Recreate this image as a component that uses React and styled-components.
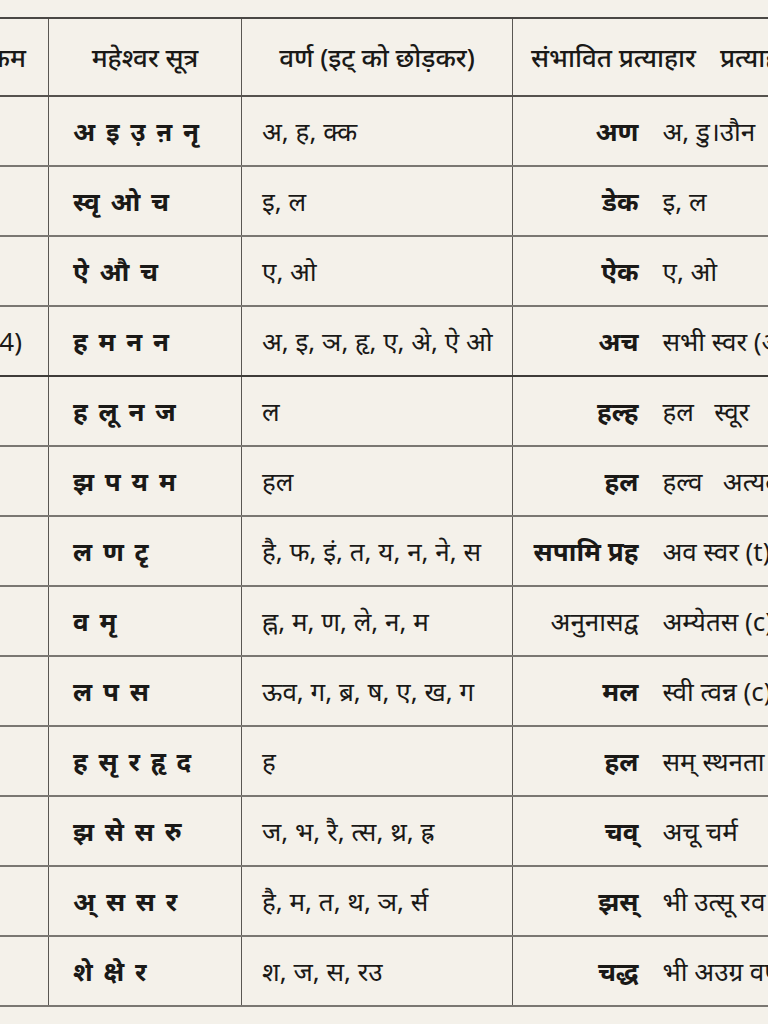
import React from 'react';
import styled, { createGlobalStyle } from 'styled-components';

const rows = [
  { no: '', sutra: 'अ इ उ़ ऩ नृ', varna: 'अ, ह, क्क', pra: 'अण', detail: 'अ, डु।उौन' },
  { no: '', sutra: 'स्वृ ओ च', varna: 'इ, ल', pra: 'डेक', detail: 'इ, ल' },
  { no: '', sutra: 'ऐ औ च', varna: 'ए, ओ', pra: 'ऐक', detail: 'ए, ओ' },
  { no: '4)', sutra: 'ह म न न', varna: 'अ, इ, ञ, हृ, ए, अे, ऐ ओ', pra: 'अच', detail: 'सभी स्वर (अच्)', thick: true },
  { no: '', sutra: 'ह लू न ज', varna: 'ल', pra: 'हल्ह', detail: 'हल\u00a0\u00a0\u00a0स्वूर' },
  { no: '', sutra: 'झ प य म', varna: 'हल', pra: 'हल', detail: 'हल्व\u00a0\u00a0\u00a0अत्यल्प' },
  { no: '', sutra: 'ल ण टृ', varna: 'है, फ, इं, त, य, न, ने, स', pra: 'सपामि प्रह', detail: 'अव स्वर (t)' },
  { no: '', sutra: 'व मृ', varna: 'ह्न, म, ण, ले, न, म', pra: 'अनुनासद्व', light: true, detail: 'अम्येतस (c)' },
  { no: '', sutra: 'ल प स', varna: 'ऊव, ग, ब्र, ष, ए, ख, ग', pra: 'मल', detail: 'स्वी त्वन्न (c)' },
  { no: '', sutra: 'ह सृ र हृ द', varna: 'ह', pra: 'हल', detail: 'सम् स्थनता' },
  { no: '', sutra: 'झ से स रु', varna: 'ज, भ, रै, त्स, थ्र, ह्र', pra: 'चव्', detail: 'अचू चर्म' },
  { no: '', sutra: 'अ् स स र', varna: 'है, म, त, थ, ञ, र्स', pra: 'झस्', detail: 'भी उत्सू रव' },
  { no: '', sutra: 'शे क्षे र', varna: 'श, ज, स, रउ', pra: 'चद्ध', detail: 'भी अउग्र वर्ण' },
];

function App() {
  return (
    <>
      <GlobalStyle />
      <Page>
        <Table>
          <colgroup>
            <col style={{ width: 110 }} />
            <col style={{ width: 193 }} />
            <col style={{ width: 271 }} />
            <col style={{ width: 136 }} />
            <col style={{ width: 220 }} />
          </colgroup>
          <thead>
            <HeadRow>
              <HeadCell $align="right">क्रम</HeadCell>
              <HeadCell>महेश्वर सूत्र</HeadCell>
              <HeadCell>वर्ण (इट् को छोड़कर)</HeadCell>
              <HeadCell colSpan={2} $align="left">
                संभावित प्रत्याहार<HeadGap>प्रत्याहार के वर्ण</HeadGap>
              </HeadCell>
            </HeadRow>
          </thead>
          <tbody>
            {rows.map((r, i) => (
              <Row key={i} $thick={r.thick}>
                <NoCell>{r.no}</NoCell>
                <SutraCell>{r.sutra}</SutraCell>
                <VarnaCell>{r.varna}</VarnaCell>
                <PraCell $light={r.light}>{r.pra}</PraCell>
                <DetailCell>{r.detail}</DetailCell>
              </Row>
            ))}
          </tbody>
        </Table>
      </Page>
    </>
  );
}

export default App;

const GlobalStyle = createGlobalStyle`
  html, body {
    margin: 0;
    padding: 0;
    background: #f4f1ea;
  }
  body {
    font-family: "Noto Sans", "Noto Sans Devanagari", "Lohit Devanagari", sans-serif;
    color: #1a1917;
  }
`;

const Page = styled.div`
  width: 768px;
  height: 1024px;
  overflow: hidden;
  background: #f4f1ea;
  padding-top: 17px;
  box-sizing: border-box;
`;

const Table = styled.table`
  margin-left: -62px;
  border-collapse: collapse;
  table-layout: fixed;
  width: 930px;
  border-top: 2px solid #4a4845;
  border-bottom: 2px solid #4a4845;
`;

const HeadRow = styled.tr`
  height: 78px;
  border-bottom: 2px solid #55524e;
`;

const HeadCell = styled.th`
  font-weight: 500;
  font-size: 26px;
  text-align: ${p => p.$align || 'center'};
  padding: ${p => (p.$align === 'left' ? '0 0 0 18px' : p.$align === 'right' ? '0 22px 0 0' : '0')};
  border-left: 1px solid #5a5753;
  white-space: nowrap;
  overflow: hidden;
`;

const HeadGap = styled.span`
  margin-left: 24px;
`;

const Row = styled.tr`
  height: 70px;
  border-bottom: ${p => (p.$thick ? '2px solid #3e3c39' : '2px solid #7a7772')};
`;

const Cell = styled.td`
  font-size: 26px;
  white-space: nowrap;
  overflow: hidden;
  padding: 0;
  vertical-align: middle;
`;

const NoCell = styled(Cell)`
  text-align: right;
  padding-right: 26px;
`;

const SutraCell = styled(Cell)`
  font-weight: 700;
  padding-left: 24px;
  border-left: 1px solid #5a5753;
  word-spacing: 4px;
`;

const VarnaCell = styled(Cell)`
  padding-left: 20px;
  border-left: 1px solid #5a5753;
`;

const PraCell = styled(Cell)`
  font-weight: ${p => (p.$light ? 400 : 700)};
  text-align: right;
  padding-right: 10px;
  border-left: 1px solid #5a5753;
`;

const DetailCell = styled(Cell)`
  padding-left: 14px;
`;
